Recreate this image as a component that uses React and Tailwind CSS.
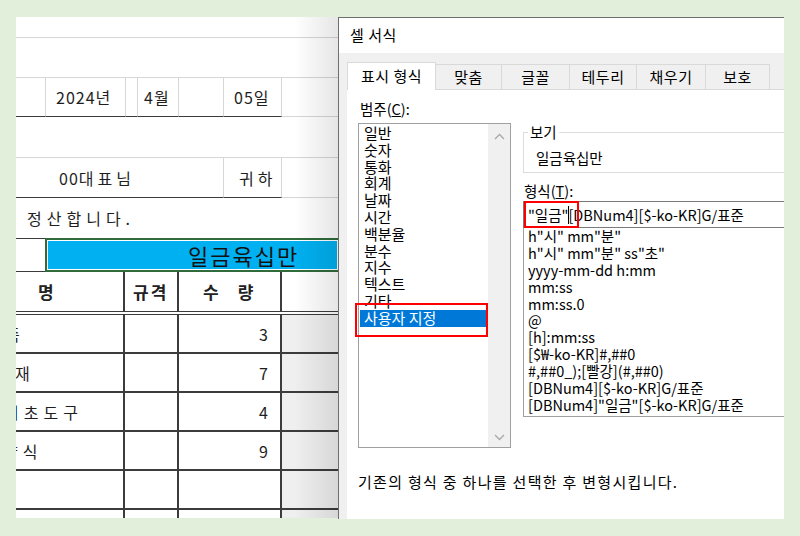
import React from 'react';

const categories = ['일반', '숫자', '통화', '회계', '날짜', '시간', '백분율', '분수', '지수', '텍스트', '기타', '사용자 지정'];

const formats = [
  'h"시" mm"분"',
  'h"시" mm"분" ss"초"',
  'yyyy-mm-dd h:mm',
  'mm:ss',
  'mm:ss.0',
  '@',
  '[h]:mm:ss',
  '[$₩-ko-KR]#,##0',
  '#,##0_);[빨강](#,##0)',
  '[DBNum4][$-ko-KR]G/표준',
  '[DBNum4]"일금"[$-ko-KR]G/표준',
];

const rows = [
  { name: '족', shift: 'ml-[-11px]', qty: '3' },
  { name: '재', shift: 'ml-[-1px]', qty: '7' },
  { name: '기초도구', shift: 'ml-[-12px]', qty: '4' },
  { name: '양식', shift: 'ml-[-13px]', qty: '9' },
  { name: '', shift: '', qty: '' },
];

const Sheet = () => {
  return (
    <div className="relative w-[322px] h-[501px] shrink-0 overflow-hidden bg-white text-[16px] leading-[20px] text-[#1e1e1e] font-['Noto_Sans_CJK_KR',sans-serif]">
      <div className="h-[21px] border-b border-[#d6d6d6]" />
      <div className="h-[40px] border-b border-[#d6d6d6]" />

      {/* 날짜 */}
      <div className="flex h-[39px]">
        <div className="w-[30px] border-r border-b border-r-[#d6d6d6] border-b-[#3c3c3c]" />
        <div className="w-[80px] flex items-center pl-[10px] tracking-[1px] border-r border-b border-r-[#d6d6d6] border-b-[#3c3c3c]">2024년</div>
        <div className="w-[12px] border-r border-b border-r-[#d6d6d6] border-b-[#3c3c3c]" />
        <div className="w-[41px] flex items-center pl-[6px] tracking-[1px] border-r border-b border-r-[#d6d6d6] border-b-[#3c3c3c]">4월</div>
        <div className="w-[45px] border-r border-b border-r-[#d6d6d6] border-b-[#3c3c3c]" />
        <div className="w-[58px] flex items-center pl-[10px] tracking-[1px] border-r border-b border-r-[#d6d6d6] border-b-[#3c3c3c]">05일</div>
        <div className="flex-1 border-b border-[#d6d6d6]" />
      </div>
      <div className="h-[41px] border-b border-[#d6d6d6]" />

      {/* 받는 사람 */}
      <div className="flex h-[40px]">
        <div className="w-[208px] flex items-center pl-[43px] border-r border-b border-r-[#d6d6d6] border-b-[#3c3c3c]">
          <span className="tracking-[1px]">00</span>
          <span className="tracking-[4px]">대표님</span>
        </div>
        <div className="w-[58px] flex items-center pl-[15px] tracking-[4px] border-r border-b border-r-[#d6d6d6] border-b-[#3c3c3c]">귀하</div>
        <div className="flex-1 border-b border-[#d6d6d6]" />
      </div>
      <div className="h-[40px] flex items-center pl-[11px] tracking-[5px]">정산합니다.</div>

      {/* 금액 */}
      <div className="flex h-[34px]">
        <div className="w-[29px] border-t border-b border-[#3c3c3c]" />
        <div className="flex-1 border-2 border-r-0 border-[#2f6b3b] p-px">
          <div className="h-full bg-[#00b0f0] flex items-center pl-[140px] text-[22px] tracking-[2px] text-[#111]">일금육십만</div>
        </div>
      </div>

      {/* 머리글 */}
      <div className="flex h-[43px] border-b-4 border-double border-[#3c3c3c] font-bold text-[17px] text-[#222]">
        <div className="w-[109px] flex items-center pl-[22px] border-r-2 border-[#3c3c3c]">명</div>
        <div className="w-[54px] flex items-center pl-[8px] tracking-[2px] border-r-2 border-[#3c3c3c]">규격</div>
        <div className="w-[103px] flex items-center gap-[19px] pl-[24px] border-r-2 border-[#3c3c3c]">
          <span>수</span>
          <span>량</span>
        </div>
        <div className="flex-1" />
      </div>

      {rows.map((r, i) => (
        <div key={i} className="flex h-[39px] border-b-2 border-[#3c3c3c]">
          <div className="w-[109px] flex items-center overflow-hidden border-r-2 border-[#3c3c3c]">
            <span className={`${r.shift} whitespace-nowrap tracking-[5px]`}>{r.name}</span>
          </div>
          <div className="w-[54px] border-r-2 border-[#3c3c3c]" />
          <div className="w-[103px] flex items-center justify-end pr-[12px] border-r-2 border-[#3c3c3c]">{r.qty}</div>
          <div className="flex-1 bg-[#efefef]" />
        </div>
      ))}
      <div className="flex h-[10px]">
        <div className="w-[109px] border-r-2 border-[#3c3c3c]" />
        <div className="w-[54px] border-r-2 border-[#3c3c3c]" />
        <div className="w-[103px] border-r-2 border-[#3c3c3c]" />
        <div className="flex-1 bg-[#efefef]" />
      </div>

      {/* 대화상자 그림자 */}
      <div className="absolute top-0 right-0 h-full w-[44px] bg-linear-to-r from-transparent to-black/10" />
    </div>
  );
};

const Chevron = ({ up }) => (
  <svg width="11" height="7" viewBox="0 0 11 7" fill="none">
    <polyline
      points={up ? '1,6 5.5,1.5 10,6' : '1,1 5.5,5.5 10,1'}
      stroke="#a8a8a8"
      strokeWidth="1.3"
    />
  </svg>
);

const tabs = [
  { label: '맞춤', w: 'w-[66px]' },
  { label: '글꼴', w: 'w-[68px]' },
  { label: '테두리', w: 'w-[67px]' },
  { label: '채우기', w: 'w-[69px]' },
  { label: '보호', w: 'w-[64px]' },
];

const FormatDialog = () => {
  return (
    <div className="relative z-10 w-[446px] h-[502px] shrink-0 flex flex-col overflow-hidden border-l border-t border-[#6e6e6e] bg-[#f0f0f0] text-black font-['Noto_Sans_CJK_KR',sans-serif]">
      <div className="h-[35px] shrink-0 bg-white flex items-center pl-[11px] text-[15px] tracking-[0.5px]">셀 서식</div>

      {/* 탭 */}
      <div className="flex items-end h-[36px] pl-[8px] text-[15px]">
        <div className="relative z-10 w-[89px] h-[28px] mb-[-1px] bg-white border border-b-0 border-[#d9d9d9] flex items-center justify-center tracking-[0.5px]">
          표시 형식
        </div>
        {tabs.map((t) => (
          <div key={t.label} className={`${t.w} h-[25px] border-t border-r border-[#d9d9d9] flex items-center justify-center tracking-[0.5px]`}>
            {t.label}
          </div>
        ))}
      </div>

      {/* 표시 형식 패널 */}
      <div className="flex-1 ml-[8px] bg-white border-t border-[#d9d9d9] flex flex-col text-[14.5px]">
        <div className="flex items-start gap-[12px] pl-[11px]">
          <div className="w-[153px] shrink-0 pt-[9px]">
            <div className="h-[20px] leading-[20px] pl-[2px]">
              범주(<span className="underline">C</span>):
            </div>
            <div className="relative mt-[4px] h-[325px] flex border border-[#a0a0a0]">
              <div className="flex-1 pt-px pl-px text-[15px]">
                {categories.map((c) => (
                  <div
                    key={c}
                    className={
                      c === '사용자 지정'
                        ? 'h-[16.8px] leading-[16.8px] pl-[4px] bg-[#0078d7] text-white'
                        : 'h-[16.8px] leading-[16.8px] pl-[4px]'
                    }
                  >
                    {c}
                  </div>
                ))}
              </div>
              <div className="w-[22px] bg-[#f0f0f0] flex flex-col items-center justify-between pt-[9px] pb-[6px]">
                <Chevron up />
                <Chevron />
              </div>
              <div className="absolute left-[-4px] top-[179px] w-[133px] h-[34px] border-2 border-[#ff0000]" />
            </div>
          </div>

          <div className="w-[300px] shrink-0 pt-[42px]">
            <div className="relative h-[41px] border border-[#dcdcdc] pl-[12px] pt-[16px] leading-[18px]">
              <span className="absolute left-[4px] top-[-10px] bg-white px-[2px] leading-[18px]">보기</span>
              일금육십만
            </div>
            <div className="mt-[8px] h-[20px] leading-[20px] pl-px">
              형식(<span className="underline">T</span>):
            </div>
            <div className="relative h-[27px] border border-[#7a7a7a] flex items-center pl-[4px] whitespace-nowrap">
              <span>"일금"</span>
              <span className="inline-block w-px h-[18px] bg-black mr-[-1px]" />
              <span>[DBNum4][$-ko-KR]G/표준</span>
              <div className="absolute left-0 top-[-1px] w-[55px] h-[27px] border-2 border-[#ff0000]" />
            </div>
            <div className="h-[189px] border border-t-0 border-[#a0a0a0] pl-[4px] whitespace-nowrap">
              {formats.map((f) => (
                <div key={f} className="h-[16.9px] leading-[16.9px]">{f}</div>
              ))}
            </div>
          </div>
        </div>
        <div className="mt-[24px] pl-[11px] h-[20px] leading-[20px] text-[15px] tracking-[1.3px]">
          기존의 형식 중 하나를 선택한 후 변형시킵니다.
        </div>
      </div>
    </div>
  );
};

export default function App() {
  return (
    <div className="w-[800px] h-[536px] bg-[#e2efda] pl-[16px] pt-[17px] flex items-start overflow-hidden">
      <Sheet />
      <FormatDialog />
    </div>
  );
}
